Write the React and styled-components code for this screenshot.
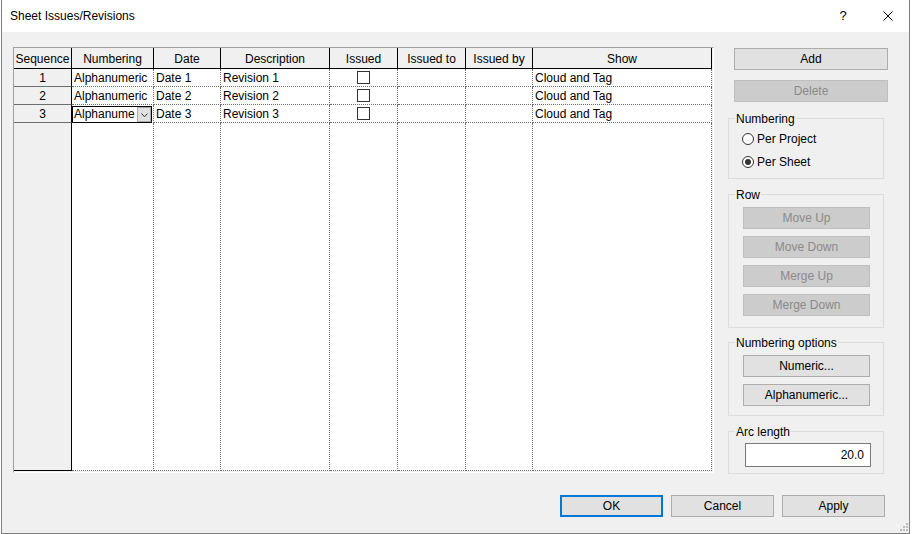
import React from "react";
import styled, { createGlobalStyle } from "styled-components";

const Global = createGlobalStyle`
  html, body { margin: 0; padding: 0; background: #ffffff; }
  body {
    font-family: "Liberation Sans", Arial, sans-serif;
    font-size: 12px;
    color: #000;
  }
  * { box-sizing: border-box; }
`;

const Window = styled.div`
  position: relative;
  margin-left: 1px;
  width: 909px;
  height: 534px;
  border: 1px solid #808080;
  border-top: none;
  background: #f0f0f0;
  display: flex;
  flex-direction: column;
`;

const TitleBar = styled.div`
  flex: none;
  height: 32px;
  background: #ffffff;
  display: flex;
  align-items: center;
`;

const Title = styled.div`
  flex: 1;
  padding-left: 8px;
  line-height: 14px;
`;

const Caption = styled.div`
  width: ${(p) => p.$w}px;
  height: 32px;
  display: flex;
  align-items: center;
  justify-content: center;
  line-height: 14px;
  font-size: ${(p) => p.$fs || 12}px;
`;

const Body = styled.div`
  flex: 1;
  display: flex;
  flex-direction: column;
  padding: 15px 24px 0 11px;
`;

const Top = styled.div`
  display: flex;
  gap: 14px;
  height: 426px;
  align-items: flex-start;
`;

const Frame = styled.div`
  flex: none;
  width: 701px;
  height: 426px;
  border-style: solid;
  border-width: 1px;
  border-color: #a0a0a0 #ffffff #ffffff #a0a0a0;
  padding: 0 1px 1px 0;
  background: #f0f0f0;
`;

const Grid = styled.div`
  display: grid;
  grid-template-columns: 58px 82px 67px 109px 68px 68px 67px 179px;
  grid-template-rows: 21px 18px 18px 18px 1fr;
  height: 100%;
  background: #ffffff;
`;

const HeadCell = styled.div`
  background: #f0f0f0;
  border-right: 1px solid #000;
  border-bottom: 1px solid #000;
  display: flex;
  align-items: center;
  justify-content: center;
  padding-top: 1px;
  line-height: 14px;
  white-space: nowrap;
  overflow: hidden;
`;

const SeqCell = styled.div`
  background: #f0f0f0;
  border-right: 1px solid #000;
  border-bottom: 1px solid ${(p) => (p.$last ? "#000" : "#6e6e6e")};
  display: flex;
  align-items: center;
  justify-content: center;
  line-height: 14px;
`;

const Cell = styled.div`
  background: #ffffff;
  border-right: 1px dotted #6f6f6f;
  border-bottom: 1px dotted #6f6f6f;
  display: flex;
  align-items: center;
  justify-content: ${(p) => (p.$center ? "center" : "flex-start")};
  padding-left: ${(p) => (p.$center ? 0 : 2)}px;
  line-height: 14px;
  white-space: nowrap;
  overflow: hidden;
`;

const EditCell = styled.div`
  border-right: 1px dotted #6f6f6f;
  background: #ffffff;
  padding-top: 1px;
`;

const Editor = styled.div`
  width: 80px;
  height: 17px;
  border: 1px solid #000;
  display: flex;
  align-items: stretch;
  background: #fff;
`;

const EditorText = styled.div`
  flex: 1;
  padding-left: 1px;
  line-height: 15px;
  white-space: nowrap;
`;

const DropButton = styled.div`
  flex: none;
  width: 14px;
  background: #e1e1e1;
  border: 1px solid #adadad;
  display: flex;
  align-items: center;
  justify-content: center;
  padding-top: 2px;
`;

const CheckBox = styled.div`
  width: 13px;
  height: 13px;
  border: 1px solid #333;
  background: #fff;
`;

const Panel = styled.div`
  flex: none;
  width: 160px;
  display: flex;
  flex-direction: column;
  padding-top: 1px;
`;

const Button = styled.button`
  flex: none;
  width: ${(p) => p.$w}px;
  height: 22px;
  margin: ${(p) => p.$mt || 0}px 0 0 ${(p) => p.$ml || 0}px;
  padding: 0;
  font-family: "Liberation Sans", Arial, sans-serif;
  font-size: 12px;
  line-height: 14px;
  color: #000;
  background: #e1e1e1;
  border: 1px solid #adadad;
  &:disabled {
    background: #cccccc;
    border-color: #bfbfbf;
    color: #8a8a8a;
  }
`;

const DefaultButton = styled(Button)`
  border: 2px solid #0078d7;
`;

const Group = styled.div`
  position: relative;
  width: 156px;
  border: 1px solid #dcdcdc;
  margin-top: ${(p) => p.$mt}px;
  padding: ${(p) => p.$pad};
  display: flex;
  flex-direction: column;
  gap: ${(p) => p.$gap || 0}px;
`;

const Legend = styled.span`
  position: absolute;
  top: -7px;
  left: 6px;
  padding: 0 1px;
  background: #f0f0f0;
  line-height: 14px;
  white-space: nowrap;
`;

const RadioRow = styled.div`
  display: flex;
  align-items: center;
  gap: 3px;
  height: 12px;
  line-height: 14px;
`;

const RadioCircle = styled.div`
  flex: none;
  width: 12px;
  height: 12px;
  border-radius: 50%;
  border: 1px solid #333;
  background: #fff;
  display: flex;
  align-items: center;
  justify-content: center;
  &::after {
    content: "";
    display: ${(p) => (p.$on ? "block" : "none")};
    width: 6px;
    height: 6px;
    border-radius: 50%;
    background: #333;
  }
`;

const TextBox = styled.div`
  width: 126px;
  height: 24px;
  border: 1px solid #7a7a7a;
  background: #fff;
  display: flex;
  align-items: center;
  justify-content: flex-end;
  padding-right: 6px;
  line-height: 14px;
`;

const Footer = styled.div`
  display: flex;
  justify-content: flex-end;
  gap: 8px;
  margin-top: 22px;
`;

const Grip = styled.svg`
  position: absolute;
  right: 1px;
  bottom: 2px;
`;

const headers = [
  "Sequence",
  "Numbering",
  "Date",
  "Description",
  "Issued",
  "Issued to",
  "Issued by",
  "Show",
];

const rows = [
  { seq: "1", num: "Alphanumeric", date: "Date 1", desc: "Revision 1" },
  { seq: "2", num: "Alphanumeric", date: "Date 2", desc: "Revision 2" },
  { seq: "3", num: "Alphanume", date: "Date 3", desc: "Revision 3", edit: true },
];

export default function App() {
  return (
    <>
      <Global />
      <Window>
        <TitleBar>
          <Title>Sheet Issues/Revisions</Title>
          <Caption $w={46} $fs={13}>?</Caption>
          <Caption $w={43}>
            <svg width="10" height="10" viewBox="0 0 10 10">
              <path d="M0.5 0.5 L9.5 9.5 M9.5 0.5 L0.5 9.5" stroke="#000" strokeWidth="1" fill="none" />
            </svg>
          </Caption>
        </TitleBar>
        <Body>
          <Top>
            <Frame>
              <Grid>
                {headers.map((h) => (
                  <HeadCell key={h}>{h}</HeadCell>
                ))}
                {rows.map((r) => (
                  <React.Fragment key={r.seq}>
                    <SeqCell>{r.seq}</SeqCell>
                    {r.edit ? (
                      <EditCell>
                        <Editor>
                          <EditorText>{r.num}</EditorText>
                          <DropButton>
                            <svg width="7" height="5" viewBox="0 0 7 5">
                              <polyline points="0.5,0.5 3.5,3.8 6.5,0.5" stroke="#333" strokeWidth="1" fill="none" />
                            </svg>
                          </DropButton>
                        </Editor>
                      </EditCell>
                    ) : (
                      <Cell>{r.num}</Cell>
                    )}
                    <Cell>{r.date}</Cell>
                    <Cell>{r.desc}</Cell>
                    <Cell $center>
                      <CheckBox />
                    </Cell>
                    <Cell />
                    <Cell />
                    <Cell>Cloud and Tag</Cell>
                  </React.Fragment>
                ))}
                <SeqCell $last />
                <Cell />
                <Cell />
                <Cell />
                <Cell />
                <Cell />
                <Cell />
                <Cell />
              </Grid>
            </Frame>
            <Panel>
              <Button $w={154} $ml={6}>Add</Button>
              <Button $w={154} $ml={6} $mt={10} disabled>
                Delete
              </Button>
              <Group $mt={16} $pad="14px 0 10px 13px" $gap={11}>
                <Legend>Numbering</Legend>
                <RadioRow>
                  <RadioCircle />
                  Per Project
                </RadioRow>
                <RadioRow>
                  <RadioCircle $on />
                  Per Sheet
                </RadioRow>
              </Group>
              <Group $mt={15} $pad="12px 0 11px 14px" $gap={7}>
                <Legend>Row</Legend>
                <Button $w={127} disabled>Move Up</Button>
                <Button $w={127} disabled>Move Down</Button>
                <Button $w={127} disabled>Merge Up</Button>
                <Button $w={127} disabled>Merge Down</Button>
              </Group>
              <Group $mt={14} $pad="12px 0 9px 14px" $gap={7}>
                <Legend>Numbering options</Legend>
                <Button $w={127}>Numeric...</Button>
                <Button $w={127}>Alphanumeric...</Button>
              </Group>
              <Group $mt={15} $pad="11px 0 6px 16px">
                <Legend>Arc length</Legend>
                <TextBox>20.0</TextBox>
              </Group>
            </Panel>
          </Top>
          <Footer>
            <DefaultButton $w={103}>OK</DefaultButton>
            <Button $w={103}>Cancel</Button>
            <Button $w={103}>Apply</Button>
          </Footer>
        </Body>
        <Grip width="8" height="8" viewBox="0 0 8 8">
          <rect x="6" y="0" width="2" height="2" fill="#bcbcbc" />
          <rect x="3" y="3" width="2" height="2" fill="#bcbcbc" />
          <rect x="6" y="3" width="2" height="2" fill="#bcbcbc" />
          <rect x="0" y="6" width="2" height="2" fill="#bcbcbc" />
          <rect x="3" y="6" width="2" height="2" fill="#bcbcbc" />
          <rect x="6" y="6" width="2" height="2" fill="#bcbcbc" />
        </Grip>
      </Window>
    </>
  );
}
